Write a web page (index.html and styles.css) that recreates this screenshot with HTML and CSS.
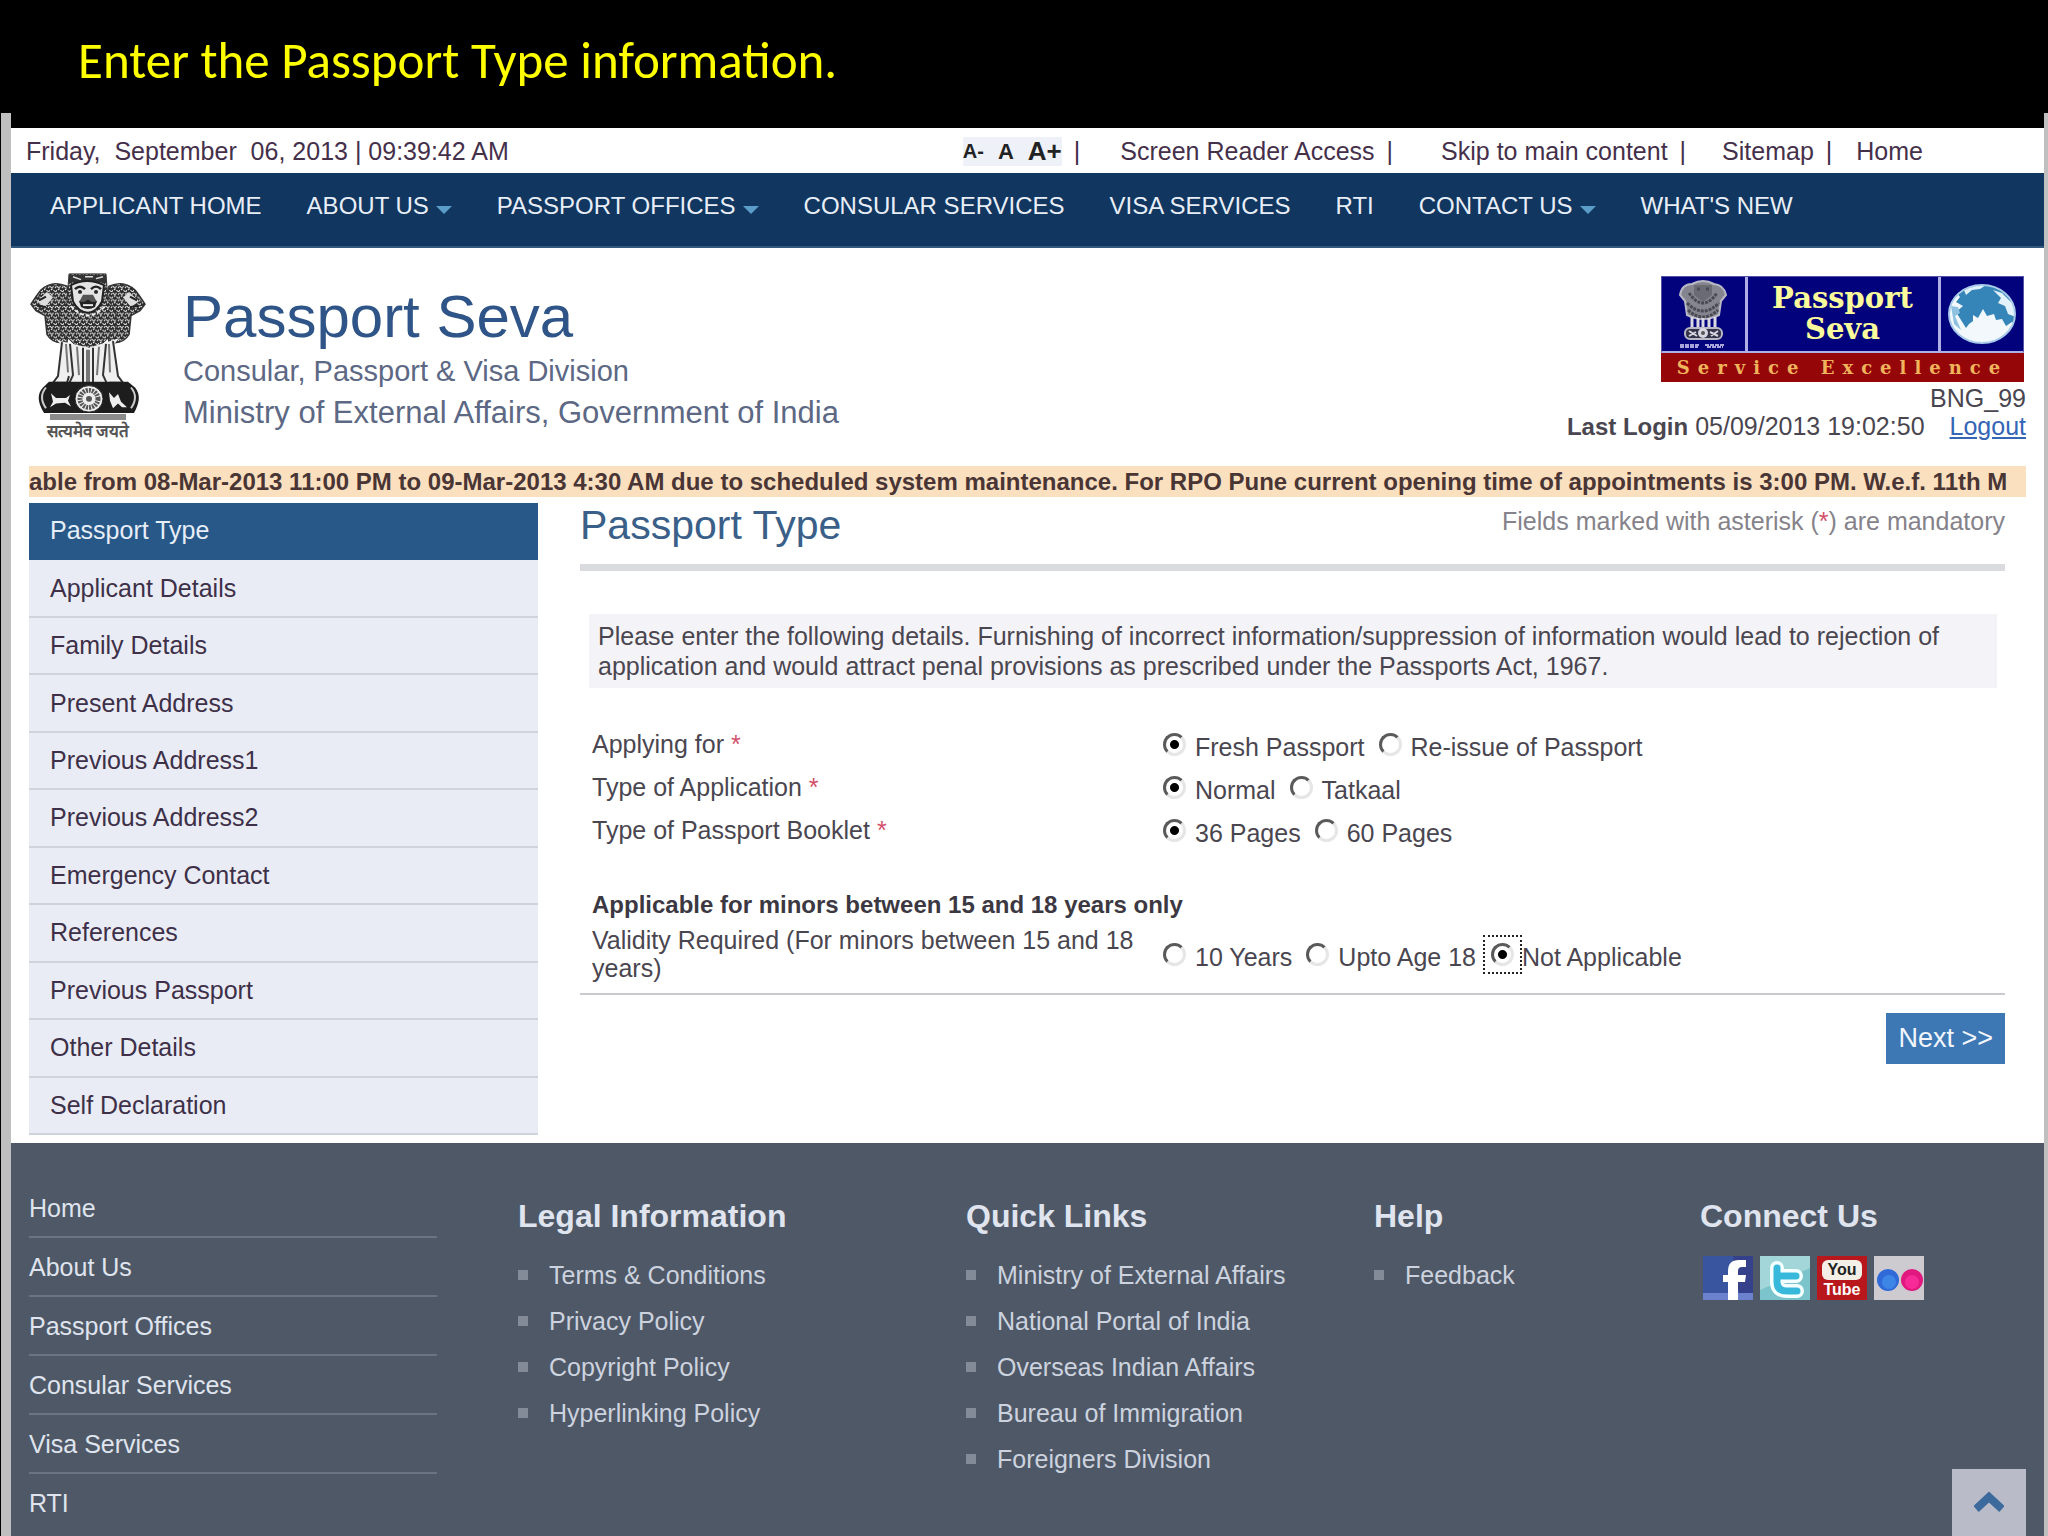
FILE: index.html
```html
<!DOCTYPE html>
<html lang="en">
<head>
    <meta charset="utf-8">
    <meta name="viewport" content="width=device-width, initial-scale=1.0">
    <title>Passport Seva</title>
    <link rel="stylesheet" href="styles.css">
</head>
<body>
    <div class="caption">Enter the Passport Type information.</div>
    <div class="frame">
        <div class="topbar">
            <span class="date">Friday,&nbsp; September&nbsp; 06, 2013 | 09:39:42 AM</span>
            <div class="tools">
                <span class="sizes"><a href="#" class="small">A-</a><a href="#" class="medium">A</a><a href="#" class="large">A+</a></span>
                <span class="bar">|</span>
                <a href="#" class="access">Screen Reader Access</a>
                <span class="bar">|</span>
                <a href="#" class="skip">Skip to main content</a>
                <span class="bar">|</span>
                <a href="#" class="sitemap">Sitemap</a>
                <span class="bar">|</span>
                <a href="#" class="home">Home</a>
            </div>
        </div>
        <nav class="menu">
            <a href="#">APPLICANT HOME</a>
            <a href="#" class="drop">ABOUT US</a>
            <a href="#" class="drop">PASSPORT OFFICES</a>
            <a href="#">CONSULAR SERVICES</a>
            <a href="#">VISA SERVICES</a>
            <a href="#">RTI</a>
            <a href="#" class="drop">CONTACT US</a>
            <a href="#">WHAT'S NEW</a>
        </nav>

        <header class="header">
            <div class="emblem">
                <svg viewBox="0 0 118 150" width="118" height="142" preserveAspectRatio="none" aria-hidden="true">
                    <defs>
                        <pattern id="fur" width="7" height="7" patternUnits="userSpaceOnUse">
                            <rect width="7" height="7" fill="#2a2a2a"/>
                            <path d="M0 1q2 3 3.500 0M3.500 5q2 3 3.500 0M1 5l1.500-1.500M5 3l1.500-2" stroke="#e8e8e8" stroke-width="1.200" fill="none"/>
                        </pattern>
                    </defs>
                    <!-- side lions -->
                    <path d="M2 34Q8 24 12 19Q23 8 38 15L43 32L38 74Q24 77 18 66L16 46L7 41Z" fill="url(#fur)" stroke="#333" stroke-width="1.500"/>
                    <path d="M116 34Q110 24 106 19Q95 8 80 15L75 32L80 74Q94 77 100 66L102 46L111 41Z" fill="url(#fur)" stroke="#333" stroke-width="1.500"/>
                    <path d="M8 31l10-10 6 6-8 10zM110 31l-10-10-6 6 8 10z" fill="#ddd"/>
                    <path d="M10 30l7-4M9 36l8 1M108 30l-7-4M109 36l-8 1" stroke="#222" stroke-width="2"/>
                    <!-- front lion -->
                    <path d="M40 2H77L79 30Q91 42 86 63L73 76L59 82L45 76L32 63Q26 42 38 30Z" fill="url(#fur)" stroke="#333"/>
                    <path d="M40 3h37v8H40z" fill="#333"/>
                    <path d="M44 5l8 3M56 5h8M67 7l7-2" stroke="#ddd" stroke-width="1.500"/>
                    <path d="M42 14Q58 5 75 14L73 31Q68 42 59 43Q49 42 44 31Z" fill="#e4e4e4" stroke="#222" stroke-width="2"/>
                    <path d="M46 18q5-5 10 0M62 18q5-5 10 0" stroke="#222" stroke-width="2.500" fill="none"/>
                    <circle cx="51" cy="21" r="2" fill="#222"/><circle cx="67" cy="21" r="2" fill="#222"/>
                    <path d="M54 24h10l4 8-9 5-9-5z" fill="#555"/>
                    <path d="M50 30q4 4 9-1q5 5 9 1l-2 7q-7 4-14 0z" fill="#222"/>
                    <path d="M54 35h10" stroke="#eee" stroke-width="2"/>
                    <path d="M42 36q17 20 34 0" stroke="#eee" stroke-width="2" fill="none" stroke-dasharray="4 2"/>
                    <!-- legs -->
                    <path d="M28 72L33 78L28 115H22L24 121H96L94 115H89L84 78L90 70L60 80Z" fill="#efefef"/>
                    <path d="M33 74L29 110l-5 7h14l2-7M41 76l3 33-4 9h14V80M64 80v38h14l-4-9 3-33M84 73l5 37 5 7H80" fill="none" stroke="#333" stroke-width="2"/>
                    <path d="M37 76l2 30M60 82v36M58 82v36M80 76l1 30M48 79l2 30M70 79l-2 30" stroke="#777" stroke-width="2"/>
                    <!-- abacus -->
                    <path d="M20 116H99L106 122Q114 132 105 149H15Q5 132 14 122Z" fill="#1d1d1d"/>
                    <path d="M17 122q-8 10 0 22M102 122q8 10 0 22" stroke="#ccc" stroke-width="2" fill="none"/>
                    <path d="M22 128l5 5h10l4-3-2 6 3 6-6-4-9 1-6 4 3-6z" fill="#eee"/>
                    <path d="M80 127l5 6 4-4 3 8 6 6h-5l-4-4-5 5-3-8z" fill="#eee"/>
                    <circle cx="60" cy="134" r="14" fill="#eee" stroke="#222"/>
                    <circle cx="60" cy="134" r="9" fill="none" stroke="#555" stroke-width="5" stroke-dasharray="2 1"/>
                    <circle cx="60" cy="134" r="3" fill="#555"/>
                </svg>
                <div class="plinth"></div>
                <span class="motto" lang="hi">सत्यमेव जयते</span>
            </div>
            <div class="titles">
                <h1>Passport Seva</h1>
                <p class="division">Consular, Passport &amp; Visa Division</p>
                <p class="ministry">Ministry of External Affairs, Government of India</p>
            </div>
            <div class="account">
                <div class="logo">
                    <div class="logo-top">
                        <div class="logo-cell">
                            <svg viewBox="0 0 60 74" width="60" height="74" aria-hidden="true">
                                <path d="M7 18Q9 7 19 7Q30 1 41 7Q51 8 53 18L48 24L46 38Q30 46 14 38L12 24Z" fill="#85858f" stroke="#b9b9c6" stroke-width="2"/>
                                <path d="M21 8h18v10l-9 7-9-7z" fill="#6b6b74"/>
                                <path d="M16 16q14 20 28 0M14 26q16 16 32 0M15 33q15 14 30 0M24 12h4M33 12h4" stroke="#4a4a55" stroke-width="3" fill="none" stroke-dasharray="3 1"/>
                                <path d="M19 40v11M25 41v10M30 41v10M36 41v10M42 40v11" stroke="#d9d9e4" stroke-width="3"/>
                                <rect x="12" y="51" width="37" height="11" rx="5" fill="#34344c" stroke="#b9b9c6" stroke-width="2"/>
                                <circle cx="30" cy="56" r="5" fill="#d6d6e0"/>
                                <circle cx="30" cy="56" r="2" fill="#555"/>
                                <path d="M16 54l8 5M16 59l7-4M37 55l8 4M38 59l7-5" stroke="#d6d6e0" stroke-width="2"/>
                                <path d="M7 68h20M7 70h18M32 68h20M34 70h16" stroke="#a9a4dc" stroke-width="2" stroke-dasharray="4 1"/>
                            </svg>
                        </div>
                        <div class="logo-name">Passport<br>Seva</div>
                        <div class="logo-cell">
                            <svg viewBox="0 0 72 64" width="72" height="64" aria-hidden="true">
                                <defs><clipPath id="ball"><ellipse cx="36" cy="32" rx="33" ry="29"/></clipPath></defs>
                                <g clip-path="url(#ball)">
                                    <rect width="72" height="64" fill="#3585b8"/>
                                    <path d="M0 20L10 10L14 15L10 20L17 24L10 30L15 38L20 46L23 42L27 39L27 33L32 36L37 27L41 34L48 32L50 38L56 37L60 44L66 40L72 42V64H10L0 40Z" fill="#f2f8fc"/>
                                    <path d="M18 8l10-6 12 1-6 4-8 1-6 5zM47 8l9 3 12 12 2 12-8-3-3-8-7-3 3-5z" fill="#e2f1fa"/>
                                    <path d="M5 24l7 1 2 6-5 3 6 14-7-6zM60 52l5-8 2 2-4 8z" fill="#8fc2e0"/>
                                </g>
                                <ellipse cx="36" cy="32" rx="33" ry="29" fill="none" stroke="#a9cbea" stroke-width="2"/>
                            </svg>
                        </div>
                    </div>
                    <div class="logo-tag">Service Excellence</div>
                </div>
                <div>BNG_99</div>
                <div class="login"><span><b>Last Login</b> 05/09/2013 19:02:50</span><a href="#">Logout</a></div>
            </div>
        </header>

        <div class="ticker"><span>able from 08-Mar-2013 11:00 PM to 09-Mar-2013 4:30 AM due to scheduled system maintenance. For RPO Pune current opening time of appointments is 3:00 PM. W.e.f. 11th M</span></div>

        <div class="content">
            <nav class="steps">
                <a href="#" class="active">Passport Type</a>
                <a href="#">Applicant Details</a>
                <a href="#">Family Details</a>
                <a href="#">Present Address</a>
                <a href="#">Previous Address1</a>
                <a href="#">Previous Address2</a>
                <a href="#">Emergency Contact</a>
                <a href="#">References</a>
                <a href="#">Previous Passport</a>
                <a href="#">Other Details</a>
                <a href="#">Self Declaration</a>
            </nav>
            <main class="main">
                <div class="heading">
                    <h2>Passport Type</h2>
                    <span class="note">Fields marked with asterisk (<span class="star">*</span>) are mandatory</span>
                </div>
                <p class="info">Please enter the following details. Furnishing of incorrect information/suppression of information would lead to rejection of application and would attract penal provisions as prescribed under the Passports Act, 1967.</p>
                <form>
                    <div class="fields">
                        <div class="row" role="radiogroup" aria-labelledby="l1">
                            <span id="l1">Applying for <span class="star">*</span></span>
                            <div class="options">
                                <label><input type="radio" name="applying" checked><span>Fresh Passport</span></label>
                                <label><input type="radio" name="applying"><span>Re-issue of Passport</span></label>
                            </div>
                        </div>
                        <div class="row" role="radiogroup" aria-labelledby="l2">
                            <span id="l2">Type of Application <span class="star">*</span></span>
                            <div class="options">
                                <label><input type="radio" name="type" checked><span>Normal</span></label>
                                <label><input type="radio" name="type"><span>Tatkaal</span></label>
                            </div>
                        </div>
                        <div class="row" role="radiogroup" aria-labelledby="l3">
                            <span id="l3">Type of Passport Booklet <span class="star">*</span></span>
                            <div class="options">
                                <label><input type="radio" name="booklet" checked><span>36 Pages</span></label>
                                <label><input type="radio" name="booklet"><span>60 Pages</span></label>
                            </div>
                        </div>
                        <h3>Applicable for minors between 15 and 18 years only</h3>
                        <div class="row validity" role="radiogroup" aria-labelledby="l4">
                            <span id="l4">Validity Required (For minors between 15 and 18 years)</span>
                            <div class="options">
                                <label><input type="radio" name="validity"><span>10 Years</span></label>
                                <label><input type="radio" name="validity"><span>Upto Age 18</span></label>
                                <label class="focused"><i class="ring"><input type="radio" name="validity" checked></i><span>Not Applicable</span></label>
                            </div>
                        </div>
                    </div>
                    <div class="actions"><button type="button">Next &gt;&gt;</button></div>
                </form>
            </main>
        </div>

        <footer class="footer">
            <div class="pages">
                <a href="#">Home</a>
                <a href="#">About Us</a>
                <a href="#">Passport Offices</a>
                <a href="#">Consular Services</a>
                <a href="#">Visa Services</a>
                <a href="#">RTI</a>
            </div>
            <div class="links">
                <h4>Legal Information</h4>
                <ul>
                    <li><a href="#">Terms &amp; Conditions</a></li>
                    <li><a href="#">Privacy Policy</a></li>
                    <li><a href="#">Copyright Policy</a></li>
                    <li><a href="#">Hyperlinking Policy</a></li>
                </ul>
            </div>
            <div class="links">
                <h4>Quick Links</h4>
                <ul>
                    <li><a href="#">Ministry of External Affairs</a></li>
                    <li><a href="#">National Portal of India</a></li>
                    <li><a href="#">Overseas Indian Affairs</a></li>
                    <li><a href="#">Bureau of Immigration</a></li>
                    <li><a href="#">Foreigners Division</a></li>
                </ul>
            </div>
            <div class="links">
                <h4>Help</h4>
                <ul>
                    <li><a href="#">Feedback</a></li>
                </ul>
            </div>
            <div class="links">
                <h4>Connect Us</h4>
                <div class="social">
                    <a href="#" aria-label="Facebook">
                        <svg viewBox="0 0 50 44" width="50" height="44">
                            <rect width="50" height="44" fill="#3a559f"/>
                            <path d="M30 0h20v37H36z" fill="#35418a"/>
                            <rect y="37" width="50" height="7" fill="#6d82cf"/>
                            <path d="M25 44V26h-5v-7h5v-4Q25 4 36 4h7v7h-4q-4 0-4 4v4h8l-1 7h-7v18z" fill="#fff"/>
                        </svg>
                    </a>
                    <a href="#" aria-label="Twitter">
                        <svg viewBox="0 0 50 44" width="50" height="44">
                            <rect width="50" height="44" fill="#7cc4cb"/>
                            <path d="M0 0h50v12L0 34z" fill="#a3d6d8"/>
                            <path d="M17 12v14q0 9 10 9h10M18 20h18" stroke="#f4ffff" stroke-width="14" stroke-linecap="round" fill="none"/>
                            <path d="M17 12v14q0 9 10 9h10M18 20h18" stroke="#38b9dc" stroke-width="7" stroke-linecap="round" fill="none"/>
                        </svg>
                    </a>
                    <a href="#" class="youtube" aria-label="YouTube"><span>You</span><span>Tube</span></a>
                    <a href="#" aria-label="Flickr">
                        <svg viewBox="0 0 50 44" width="50" height="44">
                            <rect width="50" height="44" fill="#cdcbd0"/>
                            <circle cx="14" cy="24" r="11" fill="#2f6ad8"/>
                            <circle cx="15" cy="26" r="7" fill="#3d86e6"/>
                            <circle cx="38" cy="24" r="11" fill="#e0187f"/>
                            <circle cx="38" cy="26" r="7" fill="#f72b98"/>
                        </svg>
                    </a>
                </div>
            </div>
            <button type="button" class="to-top" aria-label="Back to top">
                <svg viewBox="0 0 30 22" width="30" height="22"><path d="M2 19L15 7L28 19" fill="none" stroke="#3d6a9c" stroke-width="8"/></svg>
            </button>
        </footer>
    </div>
</body>
</html>
```
FILE: styles.css
```css
* {
    box-sizing: border-box;
}

body {
    margin: 0;
    background: #000000;
    font-family: "Liberation Sans", Arial, sans-serif;
    font-size: 25px;
    line-height: 29px;
    color: #4a4650;
    display: flex;
    flex-direction: column;
    min-height: 100vh;
}

h1, h2, h3, h4, p, ul {
    margin: 0;
    padding: 0;
}

a {
    color: inherit;
    text-decoration: none;
}

.caption {
    padding: 33px 78px 24px;
    font-family: Calibri, Carlito, Lato, sans-serif;
    font-size: 51px;
    line-height: 56px;
    color: #ffff00;
}

.frame {
    flex: 1;
    display: flex;
    flex-direction: column;
    background: #ffffff;
    border-left: 10px solid #bfbfbf;
    border-right: 4px solid #bfbfbf;
    margin-left: 1px;
}

/* top strip */
.topbar {
    display: flex;
    justify-content: space-between;
    align-items: center;
    border-top: 15px solid #000000;
    height: 60px;
    padding: 2px 121px 0 15px;
    color: #45304a;
}

.tools {
    display: flex;
    align-items: center;
}

.sizes {
    display: flex;
    align-items: center;
    gap: 14px;
    margin-right: 12px;
    background: #eef1f8;
    color: #222222;
    font-weight: bold;
}

.small {
    font-size: 20px;
}

.medium {
    font-size: 22px;
}

.large {
    font-size: 26px;
}

.access {
    margin: 0 12px 0 40px;
}

.skip {
    margin: 0 12px 0 48px;
}

.sitemap {
    margin: 0 12px 0 36px;
}

.home {
    margin-left: 24px;
}

.menu {
    display: flex;
    gap: 45px;
    height: 75px;
    padding: 18px 39px 0;
    background: #11365f;
    border-bottom: 2px solid #33597d;
    color: #e8eef8;
    font-size: 24px;
}

.drop::after {
    content: "";
    display: inline-block;
    margin-left: 7px;
    border: 8px solid transparent;
    border-top-color: #5b9cc8;
    border-bottom: none;
}

/* header */
.header {
    display: flex;
    padding: 24px 18px 0;
    height: 218px;
}

.emblem {
    width: 118px;
    display: flex;
    flex-direction: column;
    align-items: center;
}

.emblem svg {
    display: block;
}

.plinth {
    width: 76px;
    height: 6px;
    background: #8c8c8c;
}

.motto {
    font-size: 17px;
    line-height: 24px;
    font-weight: bold;
    color: #555555;
    white-space: nowrap;
}

.titles {
    flex: 1;
    padding-left: 36px;
}

.titles h1 {
    font-size: 60px;
    font-weight: normal;
    line-height: 68px;
    margin-top: 11px;
    color: #2f5487;
}

.division {
    font-size: 29px;
    line-height: 36px;
    margin-top: 2px;
    color: #5c6884;
}

.ministry {
    font-size: 31px;
    line-height: 40px;
    margin-top: 4px;
    color: #5c6884;
}

.account {
    text-align: right;
    line-height: 28px;
    padding-top: 4px;
}

.logo {
    width: 363px;
    margin: 0 2px 2px auto;
}

.logo-top {
    display: flex;
    gap: 3px;
    background: #b0aee6;
    border: 1px solid #5652a8;
    border-bottom: 2px solid #b0aee6;
}

.logo-cell {
    flex: 1;
    display: flex;
    align-items: center;
    justify-content: center;
    background: #02027c;
}

.logo-name {
    width: 190px;
    padding: 6px 0 5px;
    background: #02027c;
    color: #fbfb9c;
    font-family: "DejaVu Serif", serif;
    font-weight: bold;
    font-size: 29px;
    line-height: 31px;
    text-align: center;
}

.logo-tag {
    background: #950609;
    color: #f0b45c;
    font-family: "DejaVu Serif", serif;
    font-weight: bold;
    font-size: 18px;
    line-height: 29px;
    letter-spacing: 8px;
    text-align: center;
}

.login {
    display: flex;
    justify-content: flex-end;
    gap: 25px;
}

.login b {
    font-size: 24px;
}

.login a {
    color: #3565b5;
    text-decoration: underline;
}

.ticker {
    display: flex;
    margin: 0 18px 6px;
    padding: 1px 0;
    overflow: hidden;
    background: #fbe0c0;
    color: #4a3535;
    font-size: 24px;
    font-weight: bold;
    white-space: nowrap;
}

/* content */
.content {
    display: flex;
    gap: 42px;
    padding: 0 39px 8px 18px;
}

.steps {
    width: 509px;
    display: flex;
    flex-direction: column;
    color: #3d3048;
}

.steps a {
    flex: 1;
    display: flex;
    align-items: center;
    padding: 0 21px;
    background: #eaecf5;
    border-bottom: 2px solid #cfd3da;
}

.steps .active {
    background: #285888;
    border-color: #285888;
    color: #e6eef8;
}

.main {
    flex: 1;
    padding-bottom: 71px;
}

.heading {
    display: flex;
    justify-content: space-between;
    height: 68px;
    border-bottom: 7px solid #dadbdf;
}

.heading h2 {
    font-size: 41px;
    font-weight: normal;
    line-height: 44px;
    color: #3a5f88;
}

.note {
    line-height: 36px;
    color: #85828a;
}

.star {
    color: #d2506a;
}

.info {
    margin: 43px 8px 35px 9px;
    padding: 7px 9px;
    background: #f4f3f7;
    line-height: 30px;
}

.fields {
    padding: 0 0 11px 12px;
    border-bottom: 2px solid #c9c9cf;
}

.row {
    display: grid;
    grid-template-columns: 571px 1fr;
    align-items: center;
    min-height: 43px;
}

.options {
    display: flex;
    gap: 14px;
}

.options label {
    display: flex;
    align-items: center;
    gap: 9px;
}

.options span {
    padding-top: 6px;
}

.options input {
    appearance: none;
    display: block;
    width: 23px;
    height: 23px;
    margin: 0;
    border: 3px solid #5a5a5a;
    border-right-color: #e6e6e6;
    border-bottom-color: #e6e6e6;
    border-radius: 50%;
    background: #ffffff;
}

.options input:checked {
    background: radial-gradient(circle, #000000 0 4px, #ffffff 5px);
}

.fields h3 {
    margin: 37px 0 5px;
    font-size: 24px;
    line-height: 32px;
    color: #3c3842;
}

.validity {
    line-height: 28px;
}

.validity > span {
    padding-right: 16px;
}

.options .focused {
    gap: 0;
    margin-left: -7px;
}

.ring {
    padding: 6px;
    border: 2px dotted #222222;
}

.actions {
    display: flex;
    justify-content: flex-end;
    padding-top: 18px;
}

.actions button {
    padding: 11px 12px;
    border: none;
    background: #3d78b4;
    color: #f2f6fc;
    font-family: inherit;
    font-size: 27px;
    line-height: 29px;
}

/* footer */
.footer {
    flex: 1;
    position: relative;
    display: grid;
    grid-template-columns: 489fr 448fr 408fr 326fr 344fr;
    padding: 36px 0 0 18px;
    background: #4f5867;
    color: #dfe4ee;
}

.pages {
    margin-right: 81px;
}

.pages a {
    display: block;
    padding: 15px 0 13px;
    border-bottom: 2px solid #6a7484;
}

.pages a:last-child {
    border-bottom: none;
}

.links h4 {
    margin: 19px 0 18px;
    font-size: 32px;
    line-height: 36px;
}

.links ul {
    list-style: none;
}

.links li {
    display: flex;
    align-items: center;
    gap: 21px;
    height: 46px;
    color: #ccd3df;
}

.links li::before {
    content: "";
    width: 10px;
    height: 10px;
    background: #838a98;
}

.social {
    display: flex;
    gap: 7px;
    padding: 4px 0 0 3px;
}

.social svg {
    display: block;
}

.youtube {
    width: 50px;
    height: 44px;
    padding: 4px 5px 0;
    background: #b8181c;
    color: #ffffff;
    font-size: 16px;
    font-weight: bold;
    line-height: 20px;
    text-align: center;
}

.youtube span {
    display: block;
}

.youtube span:first-child {
    background: #f4f0e8;
    border-radius: 6px;
    color: #222222;
}

.to-top {
    position: absolute;
    right: 18px;
    bottom: 0;
    width: 74px;
    height: 67px;
    padding: 0;
    border: none;
    background: #b9bcc8;
}
```
